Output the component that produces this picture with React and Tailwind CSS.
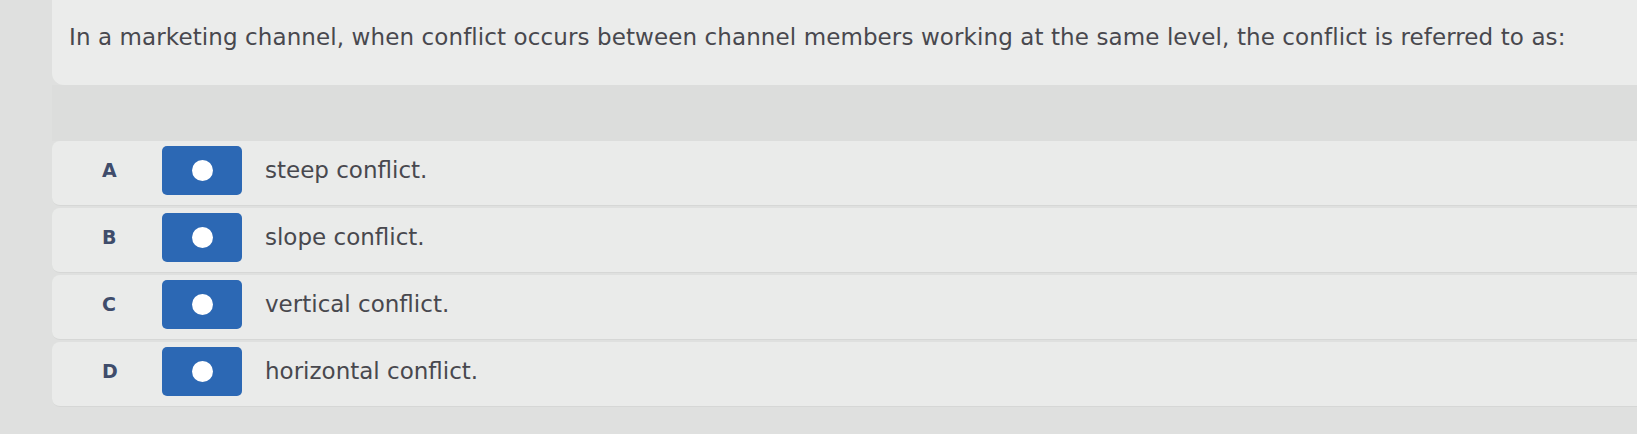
const options = [
  { key: 'A', label: 'steep conflict.' },
  { key: 'B', label: 'slope conflict.' },
  { key: 'C', label: 'vertical conflict.' },
  { key: 'D', label: 'horizontal conflict.' },
];

const font = { fontFamily: '"DejaVu Sans", Verdana, sans-serif' };

const App = () => {
  return (
    <div className="h-[434px] w-[1637px] overflow-hidden bg-[#dfe0df] pl-[52px]" style={font}>
      <div className="h-[85px] rounded-bl-xl bg-[#ebeceb] pl-[17px] pt-[20px] text-[23px] tracking-[0.1px] text-[#48484e]">
        In a marketing channel, when conflict occurs between channel members working at the same level, the conflict is referred to as:
      </div>
      <div className="h-[56px] bg-[#dcdddc]" />
      <div className="flex flex-col gap-[2px]">
        {options.map((option) => (
          <div
            key={option.key}
            className="flex h-[65px] items-center rounded-l-lg border-b border-[#d6d7d6] bg-[#eaebea] pb-[6px]"
          >
            <div className="w-[110px] pl-[50px] text-[19px] font-bold text-[#3f4c6b]">{option.key}</div>
            <div className="flex h-[49px] w-[80px] items-center justify-center rounded-[5px] bg-[#2c68b4]">
              <div className="h-[21px] w-[21px] rounded-full bg-white" />
            </div>
            <div className="pl-[23px] text-[23px] text-[#48484e]">{option.label}</div>
          </div>
        ))}
      </div>
    </div>
  );
};

export default App;
